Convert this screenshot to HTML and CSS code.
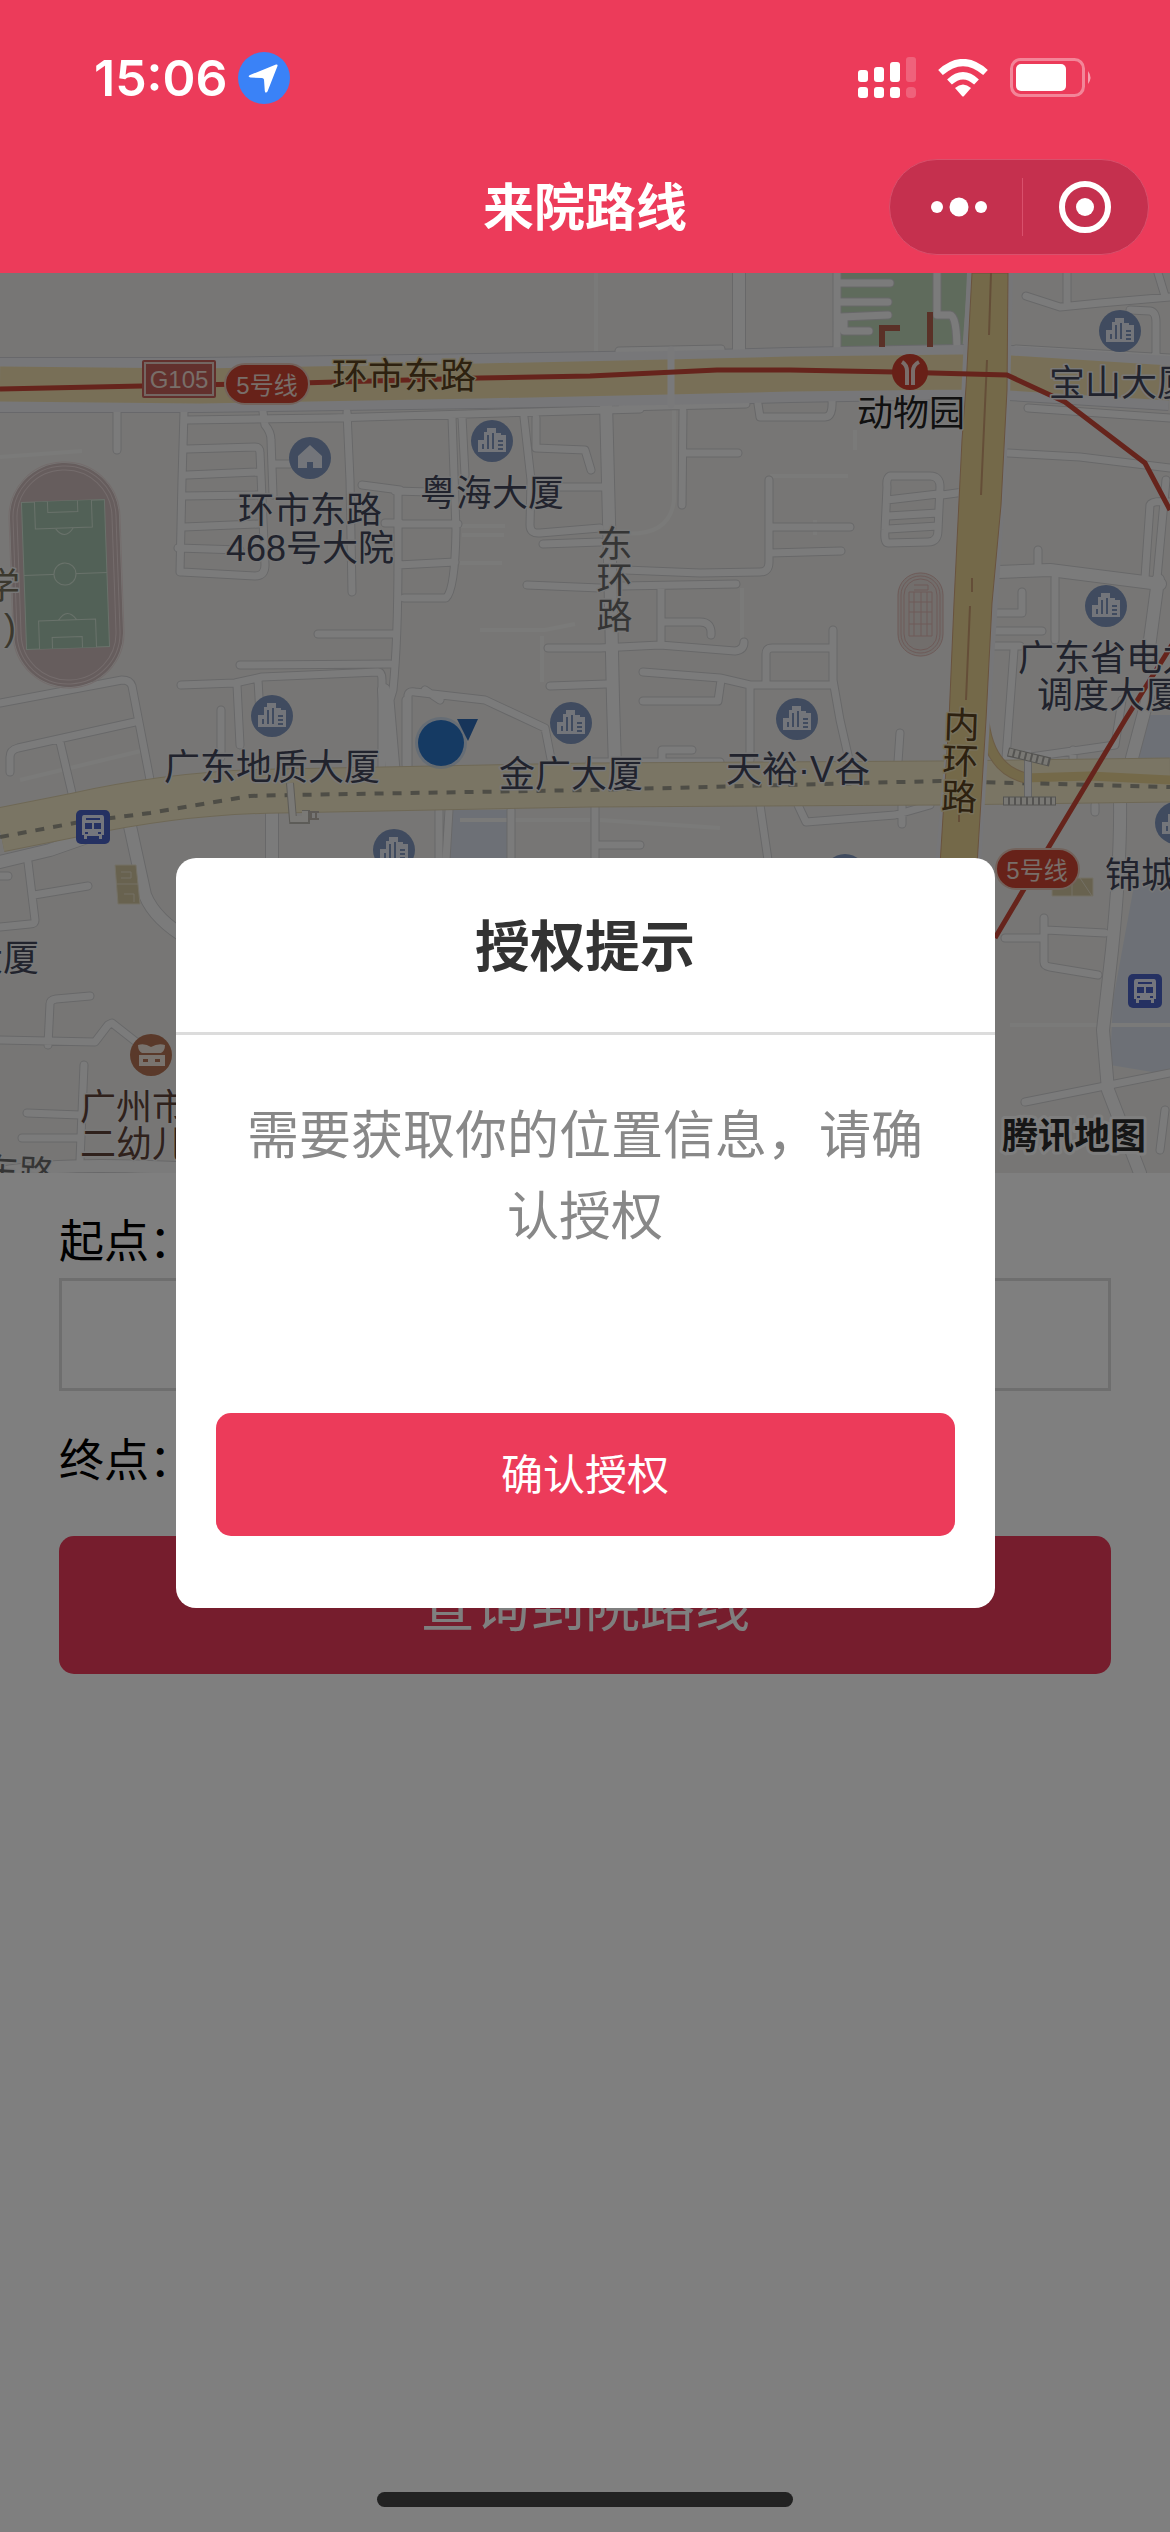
FILE: index.html
```html
<!DOCTYPE html>
<html lang="zh-CN">
<head>
<meta charset="utf-8">
<meta name="viewport" content="width=device-width">
<title>来院路线</title>
<link rel="stylesheet" href="styles.css">
</head>
<body>
<header class="top">
  <div class="status">
    <div class="status-left">
      <span class="clock">15:06</span>
      <svg class="locating" viewBox="0 0 52 52" aria-hidden="true"><circle cx="26" cy="26" r="26" fill="#3a82f7"/><path d="M38 12.500Q40 12 39.500 14L29.500 39.500Q27.500 42 26.800 39L26 27.500Q25.500 26 24 26L12.500 25.500Q9 24.500 12 23Z" fill="#fff"/></svg>
    </div>
    <div class="status-right">
      <svg class="signal" viewBox="0 0 58 42" fill="#fff" aria-hidden="true"><rect y="13" width="10" height="12" rx="3"/><rect x="16" y="10" width="10" height="15" rx="3"/><rect x="32" y="5" width="10" height="20" rx="3"/><rect x="48" width="10" height="25" rx="3" opacity=".2"/><rect y="30" width="10" height="11" rx="3"/><rect x="16" y="30" width="10" height="11" rx="3"/><rect x="32" y="30" width="10" height="11" rx="3"/><rect x="48" y="30" width="10" height="11" rx="4" opacity=".2"/></svg>
      <svg class="wifi" viewBox="0 0 50 38" aria-hidden="true"><g fill="none" stroke="#fff" stroke-width="7"><path d="M2.500 13.500Q25-6.500 47.500 13.500"/><path d="M11.500 23Q25 10.500 38.500 23"/></g><path d="M17 29Q25 22 33 29L26 37Q25 38 24 37Z" fill="#fff"/></svg>
      <svg class="battery" viewBox="0 0 84 40" aria-hidden="true"><rect x="1.500" y="1.500" width="72" height="36" rx="9" fill="none" stroke="#fff" stroke-width="3" opacity=".38"/><rect x="6" y="6" width="50" height="27" rx="5" fill="#fff"/><path d="M78 13Q83 19.500 78 26Z" fill="#fff" opacity=".5"/></svg>
    </div>
  </div>
  <div class="nav">
    <h1 class="nav-title">来院路线</h1>
    <div class="capsule">
      <button class="capsule-btn more" type="button" aria-label="更多"><svg width="58" height="20" viewBox="0 0 58 20" fill="#fff"><circle cx="7" cy="10" r="6"/><circle cx="29" cy="10" r="9.500"/><circle cx="51" cy="10" r="6"/></svg></button>
      <button class="capsule-btn" type="button" aria-label="关闭"><svg width="52" height="52" viewBox="0 0 52 52"><circle cx="26" cy="26" r="23" fill="none" stroke="#fff" stroke-width="6"/><circle cx="26" cy="26" r="9" fill="#fff"/></svg></button>
    </div>
  </div>
</header>

<main class="page">
  <svg class="map" viewBox="0 273 1170 900" preserveAspectRatio="xMidYMid slice" role="img" aria-label="地图">
    <defs>
      <path id="lanes" d="M117 408V450M184 412L182 480L180 572M187 420L330 418L640 409M187 449L255 447Q260 447 260 453L265 565Q265 576 255 576L182 572M187 475L258 472M184 496L262 495M184 527L258 524M178 548L240 550M263 412L265 425Q271 432 271 440L273 495M273 464H290M347 412L350 480L352 592M362 485L400 490M385 523H400M318 634H395M240 665L390 664M181 685L235 683L262 677L378 672Q382 672 382 680V770M237 685L240 745M258 680L260 715M221 710V757M0 703L122 680Q130 680 132 686L152 790M452 417L456 530Q455 590 446 598L404 598M462 417L465 475M398 490V560Q398 640 393 690L390 700L396 770M395 491L430 492M398 524H458M398 565L455 562M524 417L531 480L530 525Q530 534 540 533L600 528M536 418V448L585 450L591 470M560 487L605 487M543 544L600 542M619 351L721 349M622 407L746 404M671 350V405M683 411L682 505M683 453H738M625 570L700 573L760 572Q769 572 769 562V480M770 527H850M770 553L841 551M527 585L600 588M622 586L736 584M661 588V642M665 622L700 622Q712 622 711 635M548 648L600 648L660 645L735 651Q744 650 744 642M550 686L606 684M643 672L720 678L750 685H833M643 701H718L721 680M766 682V654Q766 648 772 648H833M750 685V760M408 770V695Q409 691 415 692L485 700L545 728L552 764M758 404L760 417H825Q833 417 832 400M837 273V350M841 283H890M841 302H888M841 317L888 315M844 320V331H869M937 273V315H950Q957 316 957 352M890 476H930Q940 476 940 487L938 530Q938 542 928 542L888 543Q884 543 885 530L887 487Q886 478 890 476ZM887 500L938 494M888 516L938 513M888 529L938 526M942 495L964 492M833 630V680L840 720L850 764M1026 296L1060 307L1100 303L1170 297M1067 273V302M1158 273L1165 296M1130 310L1150 311Q1156 312 1156 322V358M1016 349L1170 358M1028 408L1170 418M1008 453L1080 457L1170 468M1145 578L1150 505Q1152 500 1170 502M1157 578L1166 480M1038 570V550M1022 592V613M992 613H1020M992 631H1042M1055 578V640M992 646L1020 646M1014 650L1006 758M662 765V750H692M590 762H720M898 762L900 733M595 805V858M598 845H640M760 805L768 860M798 805L806 822L895 815L930 805M902 805V824M1046 930L1105 933M1005 938H1042M1044 918V962Q1044 966 1050 967L1098 975M1010 760L1115 745L1122 700M1073 750V765M1095 805V812M1025 1102L1170 1073M1165 1110L1160 1150M10 772V757Q10 750 18 748L135 722M60 742L75 806M406 765V700M425 690L440 700M28 862L35 920Q35 924 30 924L0 927M34 895L88 886M0 876H8M439 810V860M449 810L446 860M511 810V860M48 1045L50 1004Q50 1000 56 999L90 996M0 1040L95 1042L108 1025L112 1023L140 1045M84 1065L80 1160M27 1113L80 1115M22 1138H80"/>
      <path id="streets" d="M606 402L610 560L613 700L615 768M739 273V355M998 572L1050 570L1160 584M1158 580L1148 655M1150 690L1132 758M1120 800Q1121 860 1112 950L1103 1030L1108 1090L1140 1173M130 826L145 895Q155 920 190 940M272 812V865M384 690L392 770M0 862L50 850L90 836M0 1173Q60 1162 176 1168"/>
      <g id="tower">
        <circle r="21" fill="#8096be"/>
        <path fill="#e6ebf4" fill-rule="evenodd" d="M-14 11V-1H-8V-9H-5V-13H4V-8H9V-6H14V11ZM-10 3H-8V8H-10ZM-5-6H-3V8H-5ZM0-8H2V8H0ZM6-1H11V1H6ZM6 3H11V5H6ZM6 7H11V9H6Z"/>
      </g>
      <g id="station">
        <rect width="34" height="34" rx="5" fill="#4a63c4"/>
        <path fill="#e8ecfa" fill-rule="evenodd" d="M8 5H26Q28 5 28 8V25H26V29H23V26H11V29H8V25H6V8Q6 5 8 5ZM10 8V10H24V8ZM9 13V19H16V13ZM18 13V19H25V13ZM9 22V24H12V22ZM22 22V24H25V22Z"/>
      </g>
    </defs>
    <rect y="273" width="1170" height="900" fill="#eeedea"/>
    <path fill="#bfd6b9" d="M838 273H968L962 352H838Z"/>
    <path fill="#dbe1ec" d="M1135 880H1170V1075L1110 1065L1113 1000ZM1142 715H1170V758H1135ZM453 810H508V860H450Z"/>
    <path fill="none" stroke="#f5f4f2" stroke-width="4" d="M596 273V358M674 410V500Q670 538 620 533M460 526H505M462 535H504M460 563H502M480 630H545L575 624M542 636V682M742 588V640M855 430V450M770 476H848M815 520V535M1054 577V640M460 820H590M600 820L720 828M20 780L145 750M0 457L82 451M1010 1025H1170"/>

    <g fill="none" stroke-linecap="round" stroke-linejoin="round">
      <path stroke="#d0d1d6" stroke-width="56" stroke-linecap="butt" d="M0 385H200L480 381L667 378L790 375L960 372L1010 373L1170 383"/>
      <use href="#lanes" stroke="#d0d0d2" stroke-width="9"/>
      <use href="#streets" stroke="#d0d0d2" stroke-width="14"/>
      <use href="#lanes" stroke="#f7f7f7" stroke-width="7"/>
      <use href="#streets" stroke="#f7f7f7" stroke-width="12"/>
      <path stroke="#efeff2" stroke-width="54" stroke-linecap="butt" d="M0 385H200L480 381L667 378L790 375L960 372L1010 373L1170 383"/>
      <path stroke="#f0dfae" stroke-width="35" stroke-linecap="butt" d="M0 384L200 386L480 381L667 377L790 374L960 372L1010 373L1170 383"/>
      <path stroke="#f3f3f5" stroke-width="7" d="M671 350V405"/>
      <path stroke="#ddd0ac" stroke-width="45" stroke-linecap="butt" d="M0 830L75 815Q180 792 280 791L590 785L940 783L1170 780"/>
      <path stroke="#f4eac8" stroke-width="43" stroke-linecap="butt" d="M0 830L75 815Q180 792 280 791L590 785L940 783L1170 780"/>
      <path stroke="#e8d293" stroke-width="9" d="M1024 778L1090 776L1170 780"/>
      <path stroke="#9c9a8c" stroke-width="4" stroke-dasharray="9 9" stroke-linecap="butt" d="M0 837L80 822L150 813L250 796L290 795L590 790L940 781L1170 787"/>
      <path stroke="#d9b98c" stroke-width="11" d="M984 722Q990 770 1026 778"/>
      <path stroke="#e8d293" stroke-width="9" d="M984 722Q990 770 1026 778"/>
    </g>
    <path fill="#ececf0" d="M967 273H1013L1010 400L1004 510L990 720L981 865H935L948 720L958 510L961 400Z"/>
    <path fill="#e8d292" stroke="#d3a67c" stroke-width="1" d="M972 273H1008L1007 390L1001 505L992 603L986 720L977 865H940L949 720L954 603L962 440L966 387Z"/>
    <path fill="none" stroke="#c99c70" stroke-width="2" d="M991 273L989 335M987 360L981 495M972 578V592M970 606L966 700M959 815V822"/>
    <g fill="none" stroke="#c9c9c9" stroke-width="8"><path d="M1028 755V800"/><path stroke="#f5f5f7" stroke-width="6" d="M1028 750V805"/></g>
    <g fill="none" stroke="#aaa9a4" stroke-width="9"><path d="M1008 752L1050 762M1003 801H1056"/><path stroke="#f2f0e8" stroke-width="7" stroke-dasharray="4 2" d="M1009 752L1049 762M1004 801H1055"/></g>
    <path fill="none" stroke="#bbb8b0" stroke-width="8" d="M290 783L293 820H306V810"/>
    <path fill="none" stroke="#f4f2ec" stroke-width="6" d="M290 783L293 819H305V811"/>
    <path fill="none" stroke="#bdb5ac" stroke-width="2" d="M308 812H319M308 819H319M311 812V819M316 812V819"/>
    <path fill="none" stroke="#b4634e" stroke-width="6" d="M882 347V328H900M930 347V312"/>

    <g transform="rotate(-2 66 575)">
      <rect x="12" y="463" width="109" height="224" rx="54" fill="#cdbaba"/>
      <g fill="none" stroke="#e8d8d8"><rect x="11" y="462" width="111" height="226" rx="55"/><rect x="15" y="466" width="103" height="218" rx="51"/><rect x="19" y="470" width="95" height="210" rx="47"/></g>
      <g fill="#a5c3ae" stroke="#d3e4d6" stroke-width="1"><rect x="24" y="501" width="83" height="147"/><path d="M24 574H107M37 501V528H94V501M50 501V512H80V501M37 648V620H94V648M50 648V637H80V648M57 528Q66 541 75 528M57 620Q66 607 75 620"/><circle cx="65" cy="574" r="11"/></g>
    </g>
    <g fill="none" stroke="#dcb5b0" stroke-width="1"><rect x="898" y="573" width="45" height="83" rx="22" fill="#e4dcd9"/><rect x="901" y="576" width="39" height="77" rx="19"/><rect x="904" y="579" width="33" height="71" rx="16"/><path d="M909 592H932V636H909ZM909 602H932M909 612H932M909 624H932M914 585H928V590H914M921 592V636M914 592V636M927 592V636"/></g>
    <g fill="#d0c49f" stroke="#e8e1cb"><path d="M115 865H136L140 904H118ZM116 884H138M121 872H131V878H121M124 894H134V902"/><path d="M1052 878H1093V896H1052ZM1072 878V896M1080 878L1092 896"/></g>

    <path class="metro" d="M0 389L142 386L300 383L480 378L590 376L717 370L790 370L895 372L1007 375L1065 402L1145 463L1170 510M1175 640L1125 720L1050 845L995 938"/>
    <rect x="142" y="360" width="74" height="38" rx="2" fill="#c4615a"/>
    <rect x="145" y="363" width="68" height="32" fill="none" stroke="#e6ccc4" stroke-width="2"/>
    <g fill="#cf4432" stroke="#e6c6b8" stroke-width="2"><rect x="225" y="364" width="84" height="40" rx="20"/><rect x="996" y="849" width="83" height="40" rx="20"/></g>
    <circle cx="910" cy="372" r="18" fill="#d0402e"/>
    <path fill="none" stroke="#f4ddd4" stroke-width="4" d="M902 362Q907 365 907 371V385M919 362Q913 365 913 371V385"/>

    <use href="#tower" x="492" y="441"/><use href="#tower" x="272" y="716"/><use href="#tower" x="1120" y="331"/><use href="#tower" x="1106" y="606"/><use href="#tower" x="571" y="723"/><use href="#tower" x="797" y="719"/><use href="#tower" x="394" y="850"/><use href="#tower" x="1176" y="823"/><use href="#tower" x="845" y="875"/>
    <circle cx="310" cy="458" r="21" fill="#8096be"/><path fill="#e6ebf4" d="M310 445L322 456V468H313V462H307V468H298V456Z"/>
    <circle cx="151" cy="1055" r="21" fill="#b57354"/><path fill="#f2e6dc" fill-rule="evenodd" d="M138 1045Q145 1043 151 1047Q158 1043 165 1045Q165 1051 161 1053H142Q138 1051 138 1045ZM139 1055H165V1066H139ZM143 1059V1062H148V1059ZM155 1059V1062H160V1059Z"/>
    <use href="#station" x="76" y="810"/><use href="#station" x="1128" y="974"/>
    <circle cx="441" cy="743" r="26" fill="#a9c8ec" opacity=".5"/><circle cx="441" cy="743" r="23" fill="#2b74c6"/><path fill="#2f6ab4" d="M457 719H478L468 741Z"/>

    <g class="label">
      <text x="310" y="523">环市东路</text><text x="310" y="561">468号大院</text>
      <text x="492" y="506">粤海大厦</text>
      <text x="272" y="780">广东地质大厦</text><text x="571" y="787">金广大厦</text><text x="798" y="782">天裕·V谷</text>
      <text class="from" x="1049" y="396">宝山大厦</text>
      <text class="from" x="1018" y="671">广东省电力</text><text class="from" x="1037" y="708">调度大厦</text>
      <text class="from" x="1105" y="888">锦城</text>
      <text class="to" x="39" y="971">大厦</text>
    </g>
    <g class="label label-dark"><text x="911" y="426">动物园</text></g>
    <g class="label label-road"><text x="404" y="389">环市东路</text><text class="upright" x="957" y="706" transform="rotate(2 957 760)">内环路</text></g>
    <g class="label label-street"><text class="upright" x="611" y="525">东环路</text><text class="to" x="54" y="1187" transform="rotate(3 54 1187)">东路</text></g>
    <g class="label label-school"><text class="to" x="20" y="599">学</text><text class="to" x="16" y="640">)</text></g>
    <g class="label label-brown"><text class="from" x="80" y="1120">广州市</text><text class="from" x="80" y="1157">二幼儿</text></g>
    <g class="tag"><text x="179" y="388">G105</text><text x="267" y="394">5号线</text><text x="1037" y="879">5号线</text></g>
    <text class="brand" x="1074" y="1149">腾讯地图</text>
  </svg>

  <form class="route">
    <label class="field-label" for="start">起点：</label>
    <input class="field" id="start" type="text">
    <p class="field-label destination">终点：</p>
    <button class="btn search" type="button">查询到院路线</button>
  </form>

  <div class="overlay">
    <section class="dialog" role="dialog" aria-modal="true" aria-labelledby="dialog-title">
      <h2 class="dialog-title" id="dialog-title">授权提示</h2>
      <p class="dialog-text">需要获取你的位置信息，请确认授权</p>
      <button class="btn confirm" type="button">确认授权</button>
    </section>
  </div>
  <div class="home-bar"></div>
</main>
</body>
</html>
```
FILE: styles.css
```css
* {
  box-sizing: border-box;
}

body {
  margin: 0;
  min-height: 100vh;
  display: flex;
  flex-direction: column;
  background: #fff;
  color: #000;
  font-family: "Noto Sans CJK SC", sans-serif;
}

h1,
h2,
p {
  margin: 0;
}

button {
  border: 0;
  padding: 0;
  font-family: inherit;
  color: #fff;
}

svg {
  display: block;
}

/* Status bar and navigation */
.top {
  background: #ec3b5a;
  color: #fff;
}

.status {
  height: 141px;
  padding: 14px 76px 0 94px;
  display: flex;
  align-items: center;
  justify-content: space-between;
}

.status-left {
  display: flex;
  align-items: center;
  gap: 10px;
}

.clock {
  font: 600 50px/56px Inter, "Liberation Sans", sans-serif;
}

.locating {
  width: 52px;
  height: 52px;
}

.status-right {
  display: flex;
  align-items: center;
  gap: 22px;
}

.signal {
  width: 58px;
  height: 42px;
}

.wifi {
  width: 50px;
  height: 38px;
}

.battery {
  width: 84px;
  height: 40px;
}

.nav {
  height: 132px;
  padding: 0 21px;
  display: grid;
  grid-template-columns: 1fr auto 1fr;
  align-items: center;
}

.nav-title {
  grid-column: 2;
  padding-bottom: 6px;
  font-size: 51px;
  font-weight: 700;
  line-height: 72px;
}

.capsule {
  justify-self: end;
  width: 260px;
  height: 96px;
  display: flex;
  align-items: center;
  border: 1px solid #d9506c;
  border-radius: 48px;
  background: #c5304e;
}

.capsule-btn {
  flex: 1;
  height: 58px;
  display: flex;
  align-items: center;
  justify-content: center;
  background: none;
}

.capsule-btn + .capsule-btn {
  border-left: 1px solid #d9506c;
}

.more {
  padding-left: 6px;
}

/* Page */
.page {
  position: relative;
  flex: 1;
}

.map {
  width: 100%;
  height: 900px;
  font-family: "Liberation Sans", "Noto Sans CJK SC", sans-serif;
}

.metro {
  fill: none;
  stroke: #cc4838;
  stroke-width: 5;
}

.label {
  font-size: 36px;
  text-anchor: middle;
  fill: #43475a;
  stroke: #f0f0f0;
  stroke-width: 3;
  stroke-linejoin: round;
  paint-order: stroke;
}

.label-dark {
  fill: #222;
}

.label-road {
  fill: #5a4220;
  stroke: #efe0b4;
}

.label-street {
  fill: #6b6b6b;
}

.label-school {
  fill: #77705c;
}

.label-brown {
  fill: #5e4238;
}

.upright {
  text-anchor: start;
  writing-mode: vertical-rl;
}

.from {
  text-anchor: start;
}

.to {
  text-anchor: end;
}

.tag {
  font-size: 24px;
  text-anchor: middle;
  fill: #f0dcd2;
}

.brand {
  font-size: 36px;
  font-weight: 700;
  text-anchor: middle;
  fill: #2c2c2c;
  stroke: #fff;
  stroke-width: 6;
  stroke-linejoin: round;
  paint-order: stroke;
}

.route {
  padding: 33px 59px 0;
  display: flex;
  flex-direction: column;
}

.field-label {
  margin-bottom: 6px;
  font-size: 45px;
  line-height: 66px;
}

.field {
  width: 100%;
  height: 113px;
  padding: 0 24px;
  border: 3px solid #dcdcdc;
  background: #fff;
  font-size: 45px;
}

.destination {
  margin: 34px 0 45px;
}

.btn {
  width: 100%;
  padding-bottom: 6px;
  border-radius: 15px;
  background: #ec3b5a;
}

.search {
  height: 138px;
  font-size: 55px;
}

/* Authorisation dialog */
.overlay {
  position: absolute;
  inset: 0;
  padding-top: 585px;
  background: rgba(0, 0, 0, 0.5);
}

.dialog {
  width: 70%;
  margin: 0 auto;
  padding-bottom: 72px;
  border-radius: 20px;
  background: #fff;
}

.dialog-title {
  padding: 44px 0 50px;
  border-bottom: 3px solid #dcdcdc;
  color: #333;
  font-size: 55px;
  font-weight: 700;
  line-height: 80px;
  text-align: center;
}

.dialog-text {
  min-height: 378px;
  padding: 56px 60px 0;
  color: #888;
  font-size: 52px;
  line-height: 81px;
  text-align: center;
}

.confirm {
  display: block;
  width: calc(100% - 80px);
  height: 123px;
  margin: 0 auto;
  font-size: 42px;
}

.home-bar {
  position: absolute;
  bottom: 25px;
  left: 50%;
  width: 416px;
  height: 15px;
  border-radius: 8px;
  background: #222;
  transform: translateX(-50%);
}
```
